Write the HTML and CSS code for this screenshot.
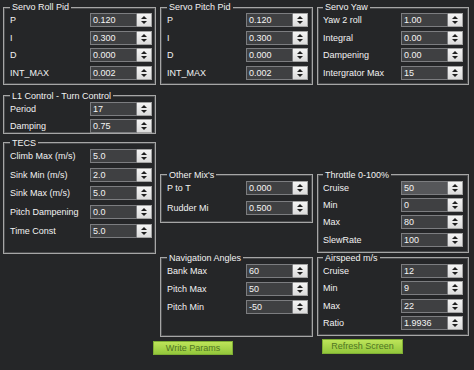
FILE: index.html
```html
<!DOCTYPE html>
<html>
<link rel="stylesheet" href="styles.css">

<head>
</head>

<body>
    <div class="main-container no-select">
        <div class="column col-left">
            <fieldset class="group roll">
                <legend>Servo Roll Pid</legend>
                <div class="rows">
                    <div class="row"><span class="label">P</span><div class="num"><div class="value">0.120</div><div class="spin"></div></div></div>
                    <div class="row"><span class="label">I</span><div class="num"><div class="value">0.300</div><div class="spin"></div></div></div>
                    <div class="row"><span class="label">D</span><div class="num"><div class="value">0.000</div><div class="spin"></div></div></div>
                    <div class="row"><span class="label">INT_MAX</span><div class="num"><div class="value">0.002</div><div class="spin"></div></div></div>
                </div>
            </fieldset>
            <fieldset class="group l1">
                <legend>L1 Control - Turn Control</legend>
                <div class="rows">
                    <div class="row"><span class="label">Period</span><div class="num"><div class="value">17</div><div class="spin"></div></div></div>
                    <div class="row"><span class="label">Damping</span><div class="num"><div class="value">0.75</div><div class="spin"></div></div></div>
                </div>
            </fieldset>
            <fieldset class="group tecs">
                <legend>TECS</legend>
                <div class="rows">
                    <div class="row"><span class="label">Climb Max (m/s)</span><div class="num"><div class="value">5.0</div><div class="spin"></div></div></div>
                    <div class="row"><span class="label">Sink Min (m/s)</span><div class="num"><div class="value">2.0</div><div class="spin"></div></div></div>
                    <div class="row"><span class="label">Sink Max (m/s)</span><div class="num"><div class="value">5.0</div><div class="spin"></div></div></div>
                    <div class="row"><span class="label">Pitch Dampening</span><div class="num"><div class="value">0.0</div><div class="spin"></div></div></div>
                    <div class="row"><span class="label">Time Const</span><div class="num"><div class="value">5.0</div><div class="spin"></div></div></div>
                </div>
            </fieldset>
        </div>

        <div class="column col-mid">
            <fieldset class="group pitch">
                <legend>Servo Pitch Pid</legend>
                <div class="rows">
                    <div class="row"><span class="label">P</span><div class="num"><div class="value">0.120</div><div class="spin"></div></div></div>
                    <div class="row"><span class="label">I</span><div class="num"><div class="value">0.300</div><div class="spin"></div></div></div>
                    <div class="row"><span class="label">D</span><div class="num"><div class="value">0.000</div><div class="spin"></div></div></div>
                    <div class="row"><span class="label">INT_MAX</span><div class="num"><div class="value">0.002</div><div class="spin"></div></div></div>
                </div>
            </fieldset>
            <fieldset class="group mix">
                <legend>Other Mix's</legend>
                <div class="rows">
                    <div class="row"><span class="label">P to T</span><div class="num"><div class="value">0.000</div><div class="spin"></div></div></div>
                    <div class="row"><span class="label">Rudder Mi</span><div class="num"><div class="value">0.500</div><div class="spin"></div></div></div>
                </div>
            </fieldset>
            <fieldset class="group nav">
                <legend>Navigation Angles</legend>
                <div class="rows">
                    <div class="row"><span class="label">Bank Max</span><div class="num"><div class="value">60</div><div class="spin"></div></div></div>
                    <div class="row"><span class="label">Pitch Max</span><div class="num"><div class="value">50</div><div class="spin"></div></div></div>
                    <div class="row"><span class="label">Pitch Min</span><div class="num"><div class="value">-50</div><div class="spin"></div></div></div>
                </div>
            </fieldset>
            <a href="#" class="button write">Write Params</a>
        </div>

        <div class="column col-right">
            <fieldset class="group yaw">
                <legend>Servo Yaw</legend>
                <div class="rows">
                    <div class="row"><span class="label">Yaw 2 roll</span><div class="num"><div class="value">1.00</div><div class="spin"></div></div></div>
                    <div class="row"><span class="label">Integral</span><div class="num"><div class="value">0.00</div><div class="spin"></div></div></div>
                    <div class="row"><span class="label">Dampening</span><div class="num"><div class="value">0.00</div><div class="spin"></div></div></div>
                    <div class="row"><span class="label">Intergrator Max</span><div class="num"><div class="value">15</div><div class="spin"></div></div></div>
                </div>
            </fieldset>
            <fieldset class="group throttle">
                <legend>Throttle 0-100%</legend>
                <div class="rows">
                    <div class="row"><span class="label">Cruise</span><div class="num"><div class="value focused">50</div><div class="spin"></div></div></div>
                    <div class="row"><span class="label">Min</span><div class="num"><div class="value">0</div><div class="spin"></div></div></div>
                    <div class="row"><span class="label">Max</span><div class="num"><div class="value">80</div><div class="spin"></div></div></div>
                    <div class="row"><span class="label">SlewRate</span><div class="num"><div class="value">100</div><div class="spin"></div></div></div>
                </div>
            </fieldset>
            <fieldset class="group airspeed">
                <legend>Airspeed m/s</legend>
                <div class="rows">
                    <div class="row"><span class="label">Cruise</span><div class="num"><div class="value">12</div><div class="spin"></div></div></div>
                    <div class="row"><span class="label">Min</span><div class="num"><div class="value">9</div><div class="spin"></div></div></div>
                    <div class="row"><span class="label">Max</span><div class="num"><div class="value">22</div><div class="spin"></div></div></div>
                    <div class="row"><span class="label">Ratio</span><div class="num"><div class="value">1.9936</div><div class="spin"></div></div></div>
                </div>
            </fieldset>
            <a href="#" class="button refresh">Refresh Screen</a>
        </div>
    </div>
</body>

</html>
```

FILE: styles.css
```css
    body {
        margin: 0;
        background-color: #252628;
        color: #f2f2f2;
        font-family: "Liberation Sans", Arial, sans-serif;
        font-size: 9px;
    }
    .no-select {
        -webkit-user-select: none;
        user-select: none;
    }

    .main-container {
        display: flex;
        gap: 4px;
        padding: 2px 0 0 3px;
        height: 368px;
    }

    .column {
        display: flex;
        flex-direction: column;
    }
    .col-left { width: 153px; }
    .col-mid { width: 153px; }
    .col-right { width: 152px; }

    /* group boxes */
    .group {
        margin: 0;
        min-width: 0;
        padding: 1px 3px 4px 6px;
        border: 1px solid #a6a6a6;
        box-shadow: inset 0 0 0 1px #4a4b4d;
    }
    .group legend {
        padding: 0 2px;
        line-height: 10px;
        height: 10px;
        background-color: #252628;
        color: #f2f2f2;
    }
    .col-mid .group { padding-right: 4px; }
    .col-right .group { padding-left: 5px; padding-right: 5px; }

    .rows {
        display: flex;
        flex-direction: column;
        gap: 3.6px;
    }
    .row {
        display: flex;
        align-items: center;
        height: 14px;
    }
    .row .label {
        flex-grow: 1;
        white-space: nowrap;
    }

    .l1 { margin-top: 6px; padding-bottom: 0; }
    .l1 .rows { gap: 3px; }
    .tecs { margin-top: 4px; padding-bottom: 15px; }
    .tecs .rows { gap: 4.75px; }

    .mix { margin-top: 85px; padding-bottom: 7px; }
    .mix .rows { gap: 6px; }
    .nav { margin-top: 30px; padding-bottom: 22px; }
    .nav .rows { gap: 4px; }

    .throttle { margin-top: 85px; padding-bottom: 5px; }
    .throttle .rows { gap: 3.3px; }
    .airspeed { padding-bottom: 5px; }

    /* numeric up/down */
    .num {
        display: flex;
        width: 62px;
        height: 14px;
    }
    .num .value {
        flex-grow: 1;
        box-sizing: border-box;
        height: 14px;
        line-height: 12px;
        padding-left: 2px;
        background-color: #3f4042;
        border: 1px solid #7c7d80;
        color: #f4f4f4;
    }
    .num .value.focused {
        background-color: #56575a;
    }
    .num .spin {
        position: relative;
        box-sizing: border-box;
        width: 15px;
        height: 14px;
        background: linear-gradient(#f4f4f4, #dcdcdc);
        border: 1px solid #a4a4a4;
        border-left: none;
    }
    .num .spin::before,
    .num .spin::after {
        content: "";
        position: absolute;
        left: 4px;
        border-left: 3px solid transparent;
        border-right: 3px solid transparent;
    }
    .num .spin::before {
        top: 2px;
        border-bottom: 3px solid #1e1e1e;
    }
    .num .spin::after {
        bottom: 2px;
        border-top: 3px solid #1e1e1e;
    }

    /* buttons */
    .button {
        display: block;
        box-sizing: border-box;
        text-align: center;
        text-decoration: none;
        color: #4f7422;
        background: linear-gradient(#bde459, #93c73c);
        border: 1px solid #7fae34;
    }
    .button:hover {
        color: #2f4a12;
    }
    .write {
        margin: 4px 0 0 -7px;
        width: 80px;
        height: 14px;
        line-height: 12px;
    }
    .refresh {
        margin: 3px 0 0 5px;
        width: 81px;
        height: 15px;
        line-height: 13px;
    }
```
